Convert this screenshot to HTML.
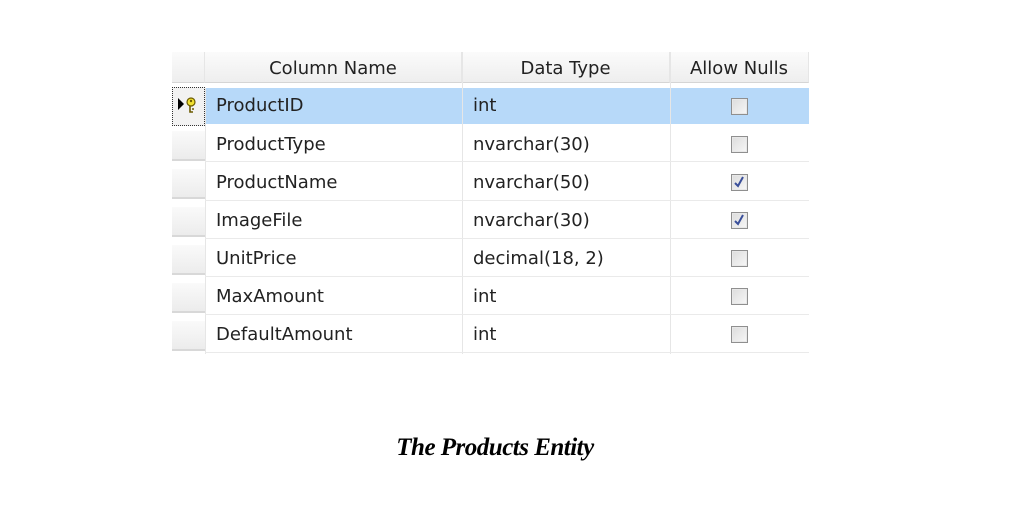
<!DOCTYPE html>
<html><head><style>
body{margin:0;width:1024px;height:515px;background:#fff;position:relative;overflow:hidden;font-family:"DejaVu Sans","Liberation Sans",sans-serif;}
.a{position:absolute}
.hd{top:52px;height:31px;background:linear-gradient(#fbfbfb,#eeeeee);border-bottom:1px solid #d5d5d5;border-right:1px solid #e6e6e6;box-sizing:border-box;font-size:18px;color:#222;text-align:center;line-height:34px;}
.sel{left:172px;width:33px;height:30px;background:linear-gradient(#fafafa,#ececec);border-bottom:2px solid #d8d8d8;box-sizing:border-box}
.row{left:205px;width:604px;height:38px;border-bottom:1px solid #eaeaea;box-sizing:border-box}
.t{position:absolute;font-size:18px;color:#222;line-height:40px;}
.vl{top:52px;height:302px;width:1px;background:#e6e6e6}
.cb{position:absolute;left:731px;width:17px;height:17px;border:1px solid #8f8f8f;box-sizing:border-box;background:linear-gradient(135deg,#dcdcdc,#f7f7f7);box-shadow:inset 0 0 0 1px #e8e8e8}
</style></head><body>
<div class="a hd" style="left:172px;width:33px"></div>
<div class="a hd" style="left:205px;width:257px">Column Name</div>
<div class="a hd" style="left:462px;width:208px">Data Type</div>
<div class="a hd" style="left:670px;width:139px">Allow Nulls</div>

<div class="a" style="left:205px;top:88px;width:604px;height:36px;background:#b7d9f9"></div>
<div class="a vl" style="left:462px"></div>
<div class="a vl" style="left:670px"></div>
<div class="a vl" style="left:205px;top:88px;height:266px"></div>

<div class="a" style="left:172px;top:87px;width:33px;height:39px;border:1px dotted #333;box-sizing:border-box;background:#f2f2f2"></div>
<svg class="a" style="left:176px;top:96px" width="26" height="18" viewBox="0 0 26 18">
<path d="M2 2 L8 8 L2 14 Z" fill="#000"/>
<circle cx="15" cy="6" r="4" fill="#f0e030" stroke="#6b5a00" stroke-width="1.2"/>
<circle cx="15" cy="5" r="1.2" fill="#6b5a00"/>
<path d="M14 10 V16 H17 M16 13 H18" stroke="#6b5a00" stroke-width="1.6" fill="none"/>
</svg>

<div class="a sel" style="top:131px"></div>
<div class="a sel" style="top:169px"></div>
<div class="a sel" style="top:207px"></div>
<div class="a sel" style="top:245px"></div>
<div class="a sel" style="top:283px"></div>
<div class="a sel" style="top:321px"></div>

<div class="a row" style="top:124px"></div>
<div class="a row" style="top:163px"></div>
<div class="a row" style="top:201px"></div>
<div class="a row" style="top:239px"></div>
<div class="a row" style="top:277px"></div>
<div class="a row" style="top:315px"></div>

<div class="t" style="left:216px;top:86px">ProductID</div><div class="t" style="left:473px;top:86px">int</div>
<div class="t" style="left:216px;top:125px">ProductType</div><div class="t" style="left:473px;top:125px">nvarchar(30)</div>
<div class="t" style="left:216px;top:163px">ProductName</div><div class="t" style="left:473px;top:163px">nvarchar(50)</div>
<div class="t" style="left:216px;top:201px">ImageFile</div><div class="t" style="left:473px;top:201px">nvarchar(30)</div>
<div class="t" style="left:216px;top:239px">UnitPrice</div><div class="t" style="left:473px;top:239px">decimal(18, 2)</div>
<div class="t" style="left:216px;top:277px">MaxAmount</div><div class="t" style="left:473px;top:277px">int</div>
<div class="t" style="left:216px;top:315px">DefaultAmount</div><div class="t" style="left:473px;top:315px">int</div>

<div class="cb" style="top:98px"></div>
<div class="cb" style="top:136px"></div>
<div class="cb" style="top:174px"><svg width="15" height="15" style="position:absolute;left:0;top:0"><path d="M3 8 L6 11 L11 2" stroke="#3a4f9a" stroke-width="2" fill="none"/></svg></div>
<div class="cb" style="top:212px"><svg width="15" height="15" style="position:absolute;left:0;top:0"><path d="M3 8 L6 11 L11 2" stroke="#3a4f9a" stroke-width="2" fill="none"/></svg></div>
<div class="cb" style="top:250px"></div>
<div class="cb" style="top:288px"></div>
<div class="cb" style="top:326px"></div>

<div class="a" style="left:300px;width:390px;top:434px;text-align:center;font-family:'Liberation Serif',serif;font-weight:bold;font-style:italic;font-size:25px;letter-spacing:-0.5px;color:#000">The Products Entity</div>
</body></html>
